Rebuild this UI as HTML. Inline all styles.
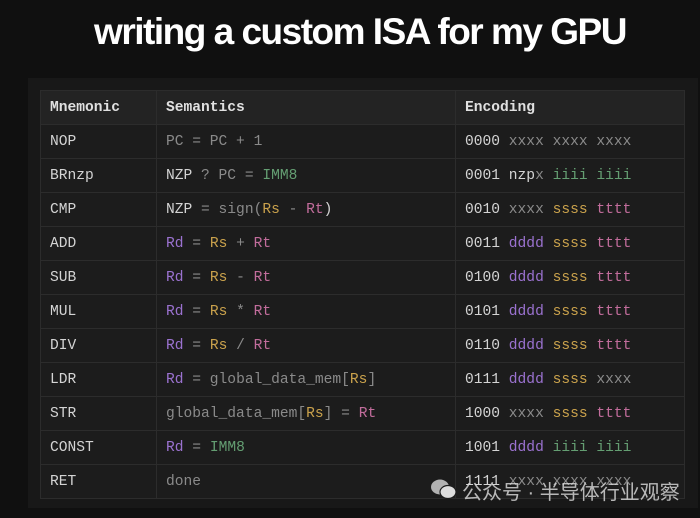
<!DOCTYPE html>
<html><head><meta charset="utf-8"><style>
body{margin:0;width:700px;height:518px;background:#101010;overflow:hidden;font-family:"Liberation Mono",monospace;}
h1{position:absolute;left:10px;top:11px;width:700px;margin:0;text-align:center;font-family:"Liberation Sans",sans-serif;font-weight:bold;font-size:37px;letter-spacing:-1.5px;color:#fff;}
.panel{position:absolute;left:28px;top:78px;width:670px;height:430px;background:#181818;}
table{position:absolute;left:40px;top:90px;width:645px;border-collapse:collapse;font-size:14.6px;color:#d4d4d4;}
td,th{border:1px solid #2c2c2c;height:33px;padding:0 0 0 9px;text-align:left;white-space:pre;background:#1c1c1c;}
th{background:#232323;font-weight:bold;color:#e0e0e0;}
.g{color:#8a8a8a}.p{color:#9b72d0}.y{color:#c9a14c}.k{color:#c26d9c}.n{color:#649e72}
.wm{position:absolute;left:462px;top:476px;font-family:"Liberation Sans","Noto Sans CJK SC",sans-serif;font-size:20px;color:#e0e0e0;opacity:.8}
.ic{position:absolute;left:430px;top:478px;width:28px;height:22px}
</style></head><body>
<h1>writing a custom ISA for my GPU</h1>
<div class="panel"></div>
<table>
<tr><th style="width:106px">Mnemonic</th><th style="width:289px">Semantics</th><th>Encoding</th></tr>
<tr><td>NOP</td><td class="g">PC = PC + 1</td><td>0000 <span class="g">xxxx xxxx xxxx</span></td></tr>
<tr><td>BRnzp</td><td>NZP <span class="g">? PC =</span> <span class="n">IMM8</span></td><td>0001 nzp<span class="g">x</span> <span class="n">iiii iiii</span></td></tr>
<tr><td>CMP</td><td>NZP <span class="g">= sign(</span><span class="y">Rs</span> <span class="g">-</span> <span class="k">Rt</span>)</td><td>0010 <span class="g">xxxx</span> <span class="y">ssss</span> <span class="k">tttt</span></td></tr>
<tr><td>ADD</td><td><span class="p">Rd</span> <span class="g">=</span> <span class="y">Rs</span> <span class="g">+</span> <span class="k">Rt</span></td><td>0011 <span class="p">dddd</span> <span class="y">ssss</span> <span class="k">tttt</span></td></tr>
<tr><td>SUB</td><td><span class="p">Rd</span> <span class="g">=</span> <span class="y">Rs</span> <span class="g">-</span> <span class="k">Rt</span></td><td>0100 <span class="p">dddd</span> <span class="y">ssss</span> <span class="k">tttt</span></td></tr>
<tr><td>MUL</td><td><span class="p">Rd</span> <span class="g">=</span> <span class="y">Rs</span> <span class="g">*</span> <span class="k">Rt</span></td><td>0101 <span class="p">dddd</span> <span class="y">ssss</span> <span class="k">tttt</span></td></tr>
<tr><td>DIV</td><td><span class="p">Rd</span> <span class="g">=</span> <span class="y">Rs</span> <span class="g">/</span> <span class="k">Rt</span></td><td>0110 <span class="p">dddd</span> <span class="y">ssss</span> <span class="k">tttt</span></td></tr>
<tr><td>LDR</td><td><span class="p">Rd</span> <span class="g">= global_data_mem[</span><span class="y">Rs</span><span class="g">]</span></td><td>0111 <span class="p">dddd</span> <span class="y">ssss</span> <span class="g">xxxx</span></td></tr>
<tr><td>STR</td><td><span class="g">global_data_mem[</span><span class="y">Rs</span><span class="g">] =</span> <span class="k">Rt</span></td><td>1000 <span class="g">xxxx</span> <span class="y">ssss</span> <span class="k">tttt</span></td></tr>
<tr><td>CONST</td><td><span class="p">Rd</span> <span class="g">=</span> <span class="n">IMM8</span></td><td>1001 <span class="p">dddd</span> <span class="n">iiii iiii</span></td></tr>
<tr><td>RET</td><td class="g">done</td><td>1111 <span class="g">xxxx xxxx xxxx</span></td></tr>
</table>
<svg class="ic" viewBox="0 0 28 22"><ellipse cx="10" cy="9" rx="9" ry="7.5" fill="#ccc" opacity=".85"/><ellipse cx="18" cy="14" rx="8" ry="6.5" fill="#ddd" stroke="#1c1c1c" stroke-width="1.2"/></svg>
<div class="wm">公众号 · 半导体行业观察</div>
</body></html>
